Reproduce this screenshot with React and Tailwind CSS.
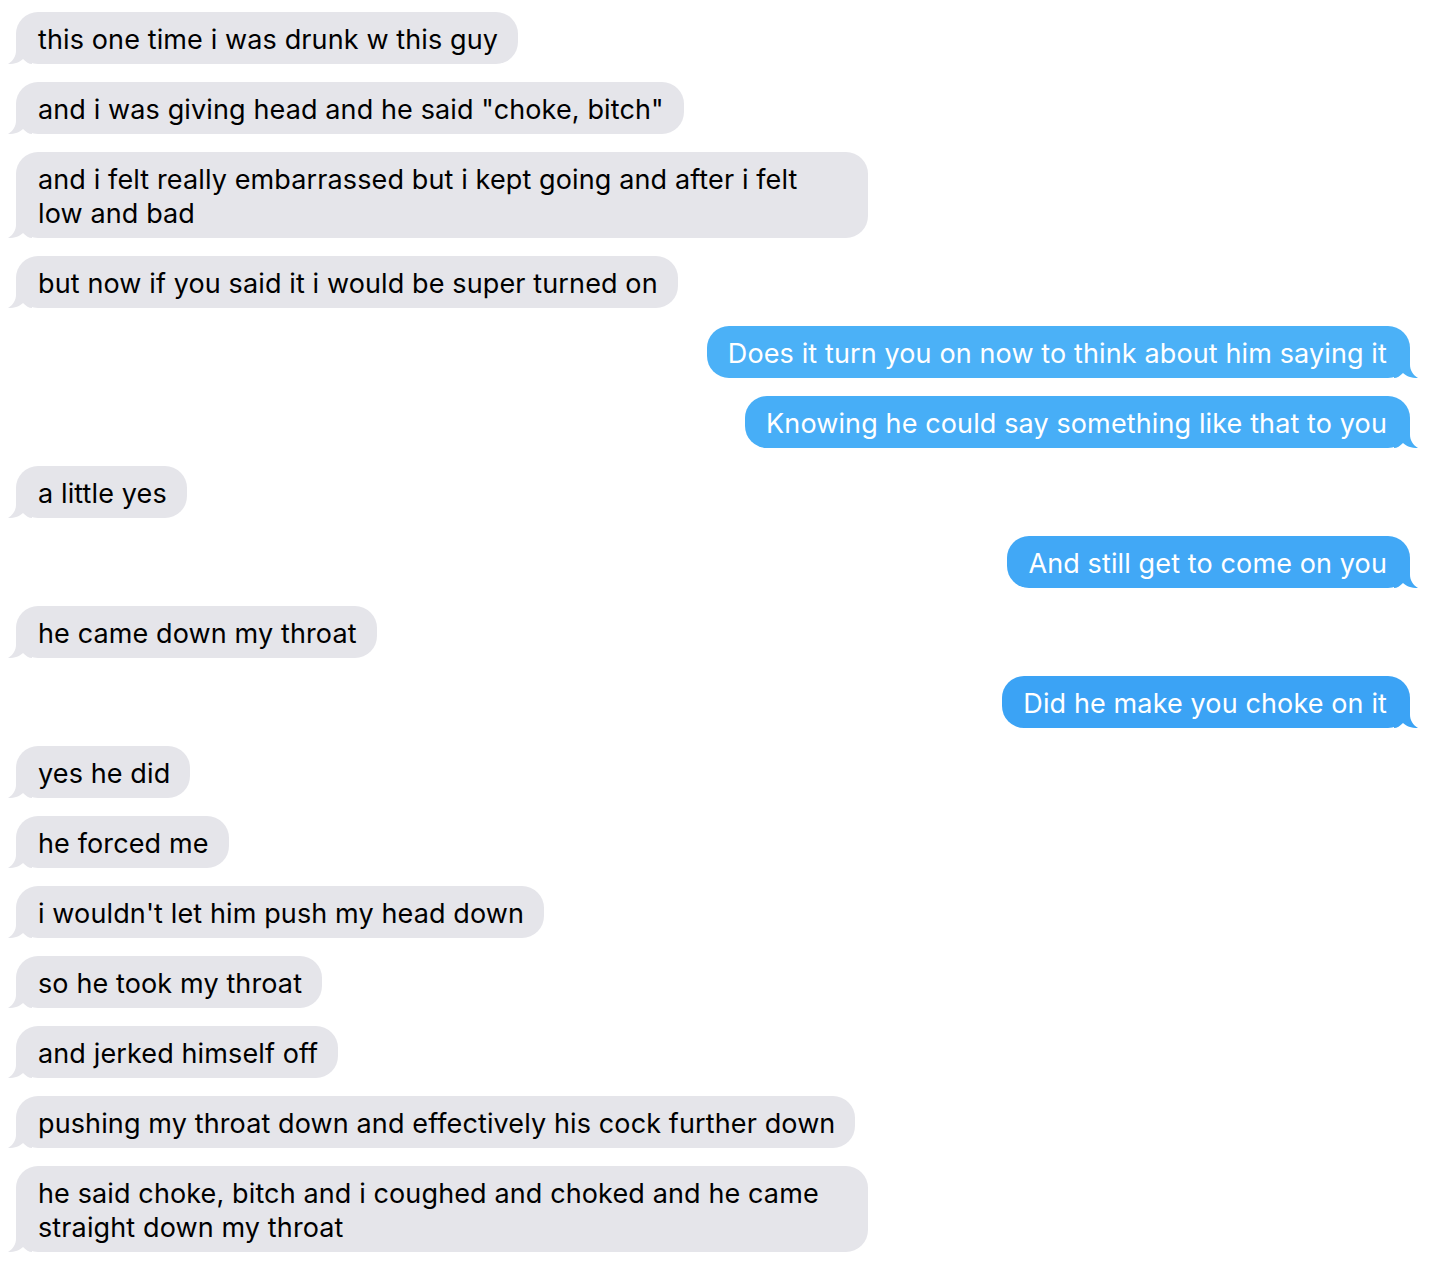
import React from "react";

const MESSAGES = [
  { from: "them", text: "this one time i was drunk w this guy" },
  { from: "them", text: 'and i was giving head and he said "choke, bitch"' },
  { from: "them", text: "and i felt really embarrassed but i kept going and after i felt low and bad" },
  { from: "them", text: "but now if you said it i would be super turned on" },
  { from: "me", text: "Does it turn you on now to think about him saying it", color: "#4BB1F7" },
  { from: "me", text: "Knowing he could say something like that to you", color: "#47AEF7" },
  { from: "them", text: "a little yes" },
  { from: "me", text: "And still get to come on you", color: "#41A8F6" },
  { from: "them", text: "he came down my throat" },
  { from: "me", text: "Did he make you choke on it", color: "#3BA3F5" },
  { from: "them", text: "yes he did" },
  { from: "them", text: "he forced me" },
  { from: "them", text: "i wouldn't let him push my head down" },
  { from: "them", text: "so he took my throat" },
  { from: "them", text: "and jerked himself off" },
  { from: "them", text: "pushing my throat down and effectively his cock further down" },
  { from: "them", text: "he said choke, bitch and i coughed and choked and he came straight down my throat" },
];

function TailLeft() {
  return (
    <svg className="absolute -left-[8px] bottom-0" width="24" height="22" viewBox="0 0 24 22">
      <path d="M8 0 L8 9 C8 14 5 19 0 22 C7 22 12 20 15 17 C18 20 21 22 24 22 L24 0 Z" fill="#E5E5EA" />
    </svg>
  );
}

function TailRight({ color }) {
  return (
    <svg className="absolute -right-[8px] bottom-0" width="24" height="22" viewBox="0 0 24 22">
      <path d="M16 0 L16 9 C16 14 19 19 24 22 C17 22 12 20 9 17 C6 20 3 22 0 22 L0 0 Z" fill={color} />
    </svg>
  );
}

function Bubble({ msg }) {
  if (msg.from === "me") {
    return (
      <div className="flex justify-end pr-[20px]">
        <div
          className="relative max-w-[852px] rounded-[22px] pl-[21px] pr-[23px] pt-[11px] pb-[7px] text-white"
          style={{ backgroundColor: msg.color }}
        >
          <TailRight color={msg.color} />
          <span className="relative">{msg.text}</span>
        </div>
      </div>
    );
  }
  return (
    <div className="flex justify-start pl-[16px]">
      <div className="relative max-w-[852px] rounded-[22px] bg-[#E5E5EA] pl-[22px] pr-[20px] pt-[11px] pb-[7px] text-black">
        <TailLeft />
        <span className="relative">{msg.text}</span>
      </div>
    </div>
  );
}

export default function App() {
  return (
    <div
      className="w-[1430px] min-h-[1266px] bg-white pt-[12px] flex flex-col gap-[18px] text-[27px] leading-[34px] tracking-[0.12px]"
      style={{ fontFamily: "Inter, 'Liberation Sans', sans-serif" }}
    >
      {MESSAGES.map((m, i) => (
        <Bubble key={i} msg={m} />
      ))}
    </div>
  );
}
